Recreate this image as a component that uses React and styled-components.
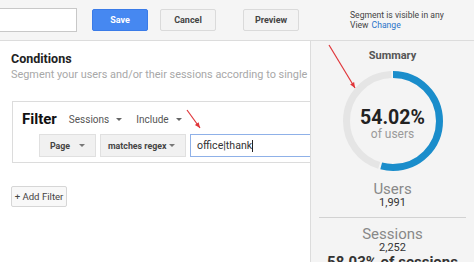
import React from 'react';
import styled, { createGlobalStyle } from 'styled-components';

const GlobalStyle = createGlobalStyle`
  html, body {
    margin: 0;
    padding: 0;
    background: #fff;
  }
  body {
    font-family: Roboto, 'Liberation Sans', Arial, sans-serif;
  }
`;

const Page = styled.div`
  position: relative;
  width: 474px;
  height: 262px;
  overflow: hidden;
  background: #fff;
`;

const TopBar = styled.div`
  display: flex;
  align-items: center;
  height: 40px;
  background: #f5f5f5;
  border-bottom: 1px solid #dcdcdc;
`;

const NameInput = styled.div`
  width: 76px;
  height: 22px;
  background: #fff;
  border: 1px solid #c8c8c8;
  border-left: none;
`;

const Btn = styled.button`
  width: 56px;
  height: 22px;
  margin-left: ${({ gap }) => gap}px;
  padding: 0;
  font-family: Roboto, 'Liberation Sans', Arial, sans-serif;
  font-size: 9px;
  font-weight: 700;
  border-radius: 2px;
  border: 1px solid ${({ primary }) => (primary ? '#3a7be8' : '#dadada')};
  background: ${({ primary }) => (primary ? '#4688f1' : '#f3f3f3')};
  color: ${({ primary }) => (primary ? '#fff' : '#444')};
`;

const Visibility = styled.div`
  margin-left: 51px;
  font-size: 8.6px;
  line-height: 10px;
  color: #444;

  & a {
    color: #2a73c8;
    margin-left: 3px;
    text-decoration: none;
  }
`;

const Body = styled.div`
  display: flex;
  height: 221px;
`;

const Left = styled.div`
  width: 311px;
  flex-shrink: 0;
  overflow: hidden;
  border-right: 1px solid #dcdcdc;
  background: #fff;
  padding-top: 10px;
  box-sizing: border-box;
`;

const Heading = styled.div`
  margin-left: 11px;
  font-size: 12.5px;
  font-weight: 700;
  line-height: 15px;
  color: #222;
`;

const SubText = styled.div`
  margin-left: 11px;
  margin-top: 2px;
  font-size: 10.9px;
  line-height: 13px;
  color: #a8a8a8;
  white-space: nowrap;
`;

const FilterBox = styled.div`
  width: 310px;
  margin: 20px 0 0 12px;
  height: 62px;
  border: 1px solid #dcdcdc;
  box-sizing: border-box;
  padding: 7px 0 0 9px;
`;

const FilterHead = styled.div`
  display: flex;
  align-items: center;
  height: 20px;
`;

const FilterTitle = styled.span`
  font-size: 15px;
  font-weight: 700;
  color: #111;
  margin-right: 12px;
`;

const Drop = styled.span`
  display: inline-flex;
  align-items: center;
  font-size: 10px;
  color: #555;
  margin-right: 14px;

  &::after {
    content: '';
    margin-left: 7px;
    border-left: 3px solid transparent;
    border-right: 3px solid transparent;
    border-top: 3px solid #666;
  }
`;

const CondRow = styled.div`
  display: flex;
  margin: 5px 0 0 17px;
  gap: 4px;
`;

const Select = styled.div`
  display: flex;
  align-items: center;
  justify-content: space-between;
  width: ${({ w }) => w}px;
  height: 23px;
  box-sizing: border-box;
  padding: 0 10px 0 ${({ pl }) => pl}px;
  background: #f1f1f1;
  border: 1px solid #e0e0e0;
  font-size: 8.8px;
  font-weight: 700;
  color: #444;

  &::after {
    content: '';
    border-left: 3px solid transparent;
    border-right: 3px solid transparent;
    border-top: 3px solid #777;
  }
`;

const ValueInput = styled.div`
  display: flex;
  align-items: center;
  width: 122px;
  height: 23px;
  box-sizing: border-box;
  padding-left: 6px;
  border: 1px solid #8fb1e8;
  font-size: 10.6px;
  color: #333;
  background: #fff;
`;

const Caret = styled.span`
  display: inline-block;
  width: 1px;
  height: 12px;
  background: #222;
`;

const AddBtn = styled.div`
  display: inline-flex;
  align-items: center;
  justify-content: center;
  width: 56px;
  height: 21px;
  margin: 23px 0 0 11px;
  box-sizing: border-box;
  border: 1px solid #d6d6d6;
  border-radius: 2px;
  background: #f8f8f8;
  font-size: 9.6px;
  color: #444;
`;

const Right = styled.div`
  flex: 1;
  background: #f4f4f4;
  display: flex;
  flex-direction: column;
  align-items: center;
  padding-top: 8px;
`;

const SummaryTitle = styled.div`
  font-size: 11px;
  font-weight: 700;
  line-height: 13px;
  color: #555;
`;

const Donut = styled.div`
  display: grid;
  width: 100px;
  height: 100px;
  margin-top: 9px;

  & > * {
    grid-area: 1 / 1;
  }
`;

const DonutLabel = styled.div`
  display: flex;
  flex-direction: column;
  align-items: center;
  justify-content: center;
  gap: 1px;
  padding-top: 6px;
`;

const Percent = styled.div`
  font-size: 19.5px;
  font-weight: 700;
  line-height: 19px;
  color: #222;
`;

const OfUsers = styled.div`
  font-size: 12px;
  line-height: 13px;
  color: #9a9a9a;
`;

const Metric = styled.div`
  display: flex;
  flex-direction: column;
  align-items: center;
  margin-top: ${({ mt }) => mt}px;
`;

const MetricName = styled.div`
  font-size: 15px;
  line-height: 16px;
  color: #888;
`;

const MetricValue = styled.div`
  font-size: 11px;
  line-height: 12px;
  color: #333;
`;

const Divider = styled.div`
  width: 147px;
  height: 1px;
  flex-shrink: 0;
  margin-top: 8px;
  background: #d2d2d2;
`;

const Cut = styled.div`
  font-size: 15px;
  line-height: 16px;
  font-weight: 700;
  color: #333;
  white-space: nowrap;
`;

const Overlay = styled.svg`
  position: absolute;
  left: 0;
  top: 0;
  pointer-events: none;
`;

const Arrow = ({ x1, y1, x2, y2 }) => {
  const a = Math.atan2(y2 - y1, x2 - x1);
  const l = 6;
  const p1 = [x2 - l * Math.cos(a - 0.4), y2 - l * Math.sin(a - 0.4)];
  const p2 = [x2 - l * Math.cos(a + 0.4), y2 - l * Math.sin(a + 0.4)];
  return (
    <g>
      <line x1={x1} y1={y1} x2={x2} y2={y2} stroke="#e0363a" strokeWidth="1.2" />
      <polygon points={`${x2},${y2} ${p1.join(',')} ${p2.join(',')}`} fill="#e0363a" />
    </g>
  );
};

const R = 46.5;
const C = 2 * Math.PI * R;

export default function App() {
  const pct = 0.5402;
  const blue = C * pct;
  const gap = 2;

  return (
    <Page>
      <GlobalStyle />
      <TopBar>
        <NameInput />
        <Btn primary gap={15}>Save</Btn>
        <Btn gap={12}>Cancel</Btn>
        <Btn gap={27}>Preview</Btn>
        <Visibility>
          Segment is visible in any
          <br />
          View<a href="#">Change</a>
        </Visibility>
      </TopBar>
      <Body>
        <Left>
          <Heading>Conditions</Heading>
          <SubText>Segment your users and/or their sessions according to single or multi-session conditions.</SubText>
          <FilterBox>
            <FilterHead>
              <FilterTitle>Filter</FilterTitle>
              <Drop>Sessions</Drop>
              <Drop>Include</Drop>
            </FilterHead>
            <CondRow>
              <Select w={57} pl={10}>Page</Select>
              <Select w={86} pl={7}>matches regex</Select>
              <ValueInput>
                office|thank
                <Caret />
              </ValueInput>
            </CondRow>
          </FilterBox>
          <AddBtn>+ Add Filter</AddBtn>
        </Left>
        <Right>
          <SummaryTitle>Summary</SummaryTitle>
          <Donut>
            <svg width="100" height="100" viewBox="0 0 100 100">
              <g transform="rotate(-90 50 50)">
                <circle
                  cx="50"
                  cy="50"
                  r={R}
                  fill="none"
                  stroke="#e5e5e5"
                  strokeWidth="7"
                  strokeDasharray={`0 ${blue + gap} ${C - blue - 2 * gap} ${gap}`}
                />
                <circle
                  cx="50"
                  cy="50"
                  r={R}
                  fill="none"
                  stroke="#1a8dcb"
                  strokeWidth="7"
                  strokeDasharray={`${blue} ${C}`}
                />
              </g>
            </svg>
            <DonutLabel>
              <Percent>54.02%</Percent>
              <OfUsers>of users</OfUsers>
            </DonutLabel>
          </Donut>
          <Metric mt={10}>
            <MetricName>Users</MetricName>
            <MetricValue>1,991</MetricValue>
          </Metric>
          <Divider />
          <Metric mt={8}>
            <MetricName>Sessions</MetricName>
            <MetricValue>2,252</MetricValue>
          </Metric>
          <Cut>58.03% of sessions</Cut>
        </Right>
      </Body>
      <Overlay width="474" height="262">
        <Arrow x1={329} y1={45} x2={355} y2={88} />
        <Arrow x1={187} y1={110} x2={200} y2={128} />
      </Overlay>
    </Page>
  );
}
